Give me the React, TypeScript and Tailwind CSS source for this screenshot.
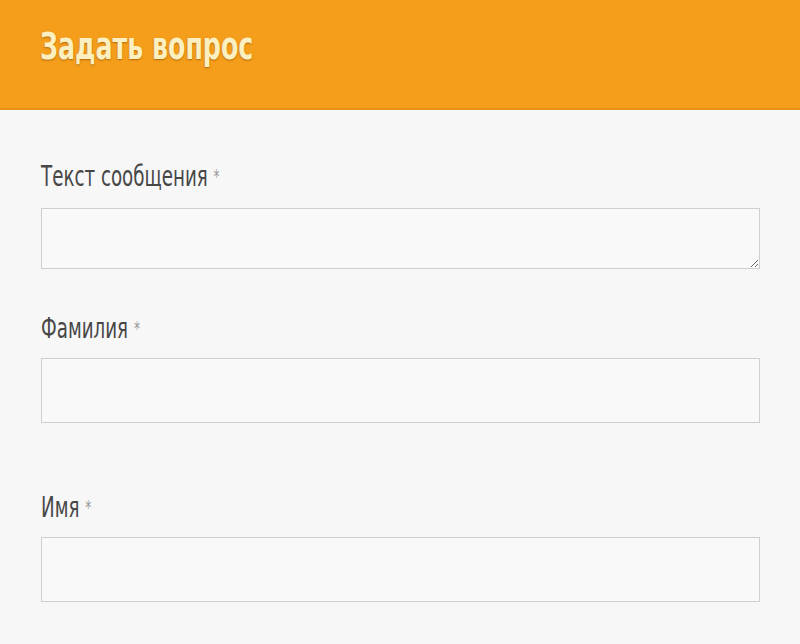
export default function App() {
  const labelCls = 'block origin-left scale-x-[0.7] text-[29px] leading-[36px] text-[#474747] whitespace-nowrap'
  const boxCls = 'block w-[719px] bg-[#f9f9f9] border border-[#cfcfcf] outline-none'

  return (
    <div
      className="w-[800px] h-[644px] bg-[#f7f7f7] overflow-hidden"
      style={{ fontFamily: '"DejaVu Sans Condensed", "Liberation Sans", sans-serif' }}
    >
      <div className="h-[110px] bg-[#f59e1b] border-b-2 border-[#e8901a] px-[40px] pt-[24px]">
        <h1 className="origin-left scale-x-[0.74] whitespace-nowrap text-[38px] leading-[44px] font-bold text-[#fcefc0] [text-shadow:0_1px_2px_rgba(120,60,0,0.55)]">
          Задать вопрос
        </h1>
      </div>

      <div className="px-[41px] pt-[48px]">
        <label className={labelCls}>
          Текст сообщения <span className="text-[19px] align-top text-[#999]">*</span>
        </label>
        <textarea className={`mt-[14px] h-[61px] ${boxCls}`} />

        <label className={`mt-[41px] ${labelCls}`}>
          Фамилия <span className="text-[19px] align-top text-[#999]">*</span>
        </label>
        <input className={`mt-[12px] h-[65px] ${boxCls}`} />

        <label className={`mt-[66px] ${labelCls}`}>
          Имя <span className="text-[19px] align-top text-[#999]">*</span>
        </label>
        <input className={`mt-[12px] h-[65px] ${boxCls}`} />
      </div>
    </div>
  )
}
